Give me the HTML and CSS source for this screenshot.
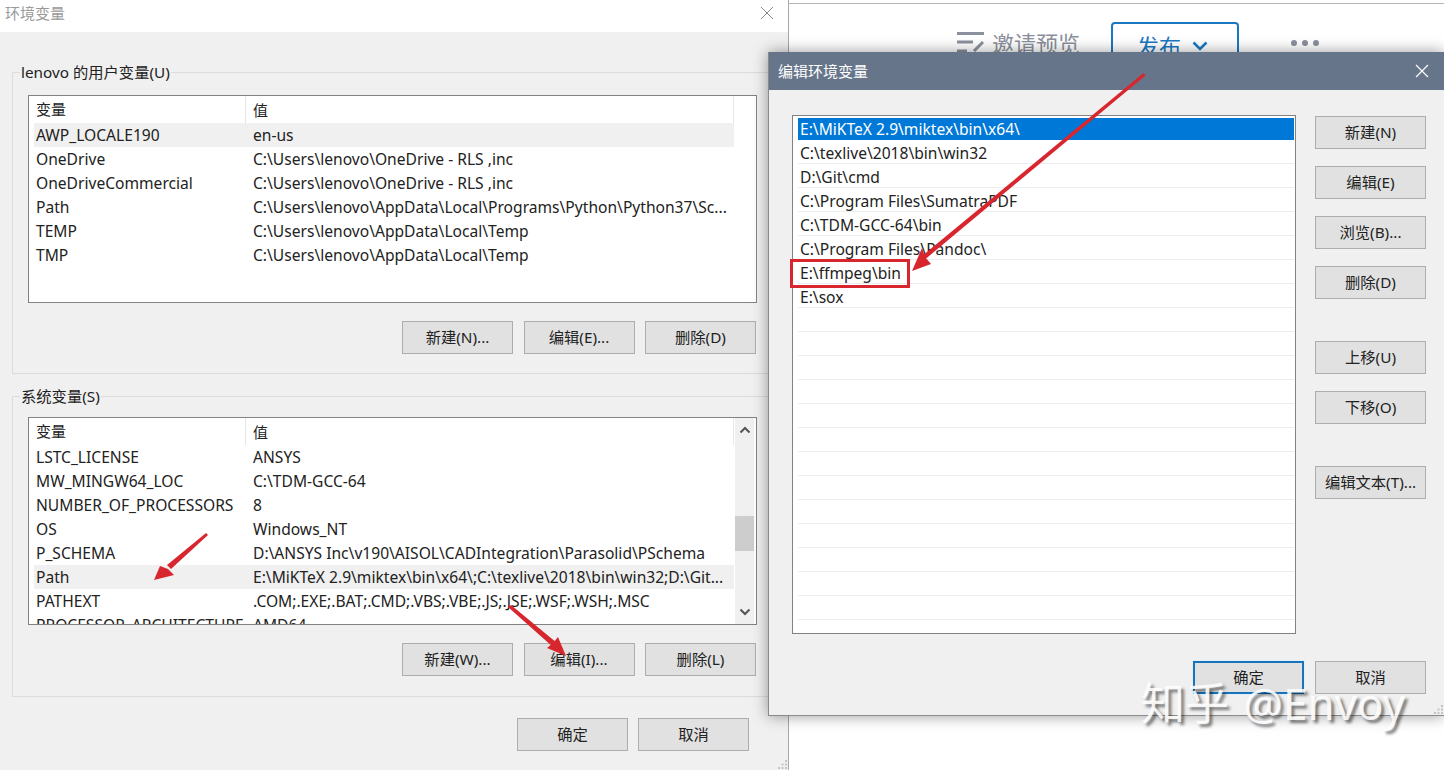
FILE: index.html
```html
<!DOCTYPE html>
<html lang="zh-CN">
<head>
<meta charset="utf-8">
<title>环境变量</title>
<link rel="stylesheet" href="styles.css">
</head>
<body>
<div class="desk">
  <section class="envwin">
    <header class="envtitle">
      <span>环境变量</span>
      <svg class="close" width="14" height="14" viewBox="0 0 14 14"><path d="M1 1L13 13M13 1L1 13" stroke="#8a8a8a" stroke-width="1" fill="none"/></svg>
    </header>
    <div class="envbody">
      <fieldset class="group group-user">
        <legend>lenovo 的用户变量(U)</legend>
        <div class="list">
          <div class="listmain">
            <div class="thead"><span class="c1">变量</span><span class="c2">值</span></div>
            <div class="row hl"><span class="c1">AWP_LOCALE190</span><span class="c2">en-us</span></div>
            <div class="row"><span class="c1">OneDrive</span><span class="c2">C:\Users\lenovo\OneDrive - RLS ,inc</span></div>
            <div class="row"><span class="c1">OneDriveCommercial</span><span class="c2">C:\Users\lenovo\OneDrive - RLS ,inc</span></div>
            <div class="row"><span class="c1">Path</span><span class="c2">C:\Users\lenovo\AppData\Local\Programs\Python\Python37\Sc...</span></div>
            <div class="row"><span class="c1">TEMP</span><span class="c2">C:\Users\lenovo\AppData\Local\Temp</span></div>
            <div class="row"><span class="c1">TMP</span><span class="c2">C:\Users\lenovo\AppData\Local\Temp</span></div>
          </div>
          <div class="sb-blank"></div>
        </div>
        <div class="btnrow">
          <button class="btn">新建(N)...</button>
          <button class="btn">编辑(E)...</button>
          <button class="btn">删除(D)</button>
        </div>
      </fieldset>
      <fieldset class="group group-sys">
        <legend>系统变量(S)</legend>
        <div class="list">
          <div class="listmain">
            <div class="thead"><span class="c1">变量</span><span class="c2">值</span></div>
            <div class="row"><span class="c1">LSTC_LICENSE</span><span class="c2">ANSYS</span></div>
            <div class="row"><span class="c1">MW_MINGW64_LOC</span><span class="c2">C:\TDM-GCC-64</span></div>
            <div class="row"><span class="c1">NUMBER_OF_PROCESSORS</span><span class="c2">8</span></div>
            <div class="row"><span class="c1">OS</span><span class="c2">Windows_NT</span></div>
            <div class="row"><span class="c1">P_SCHEMA</span><span class="c2">D:\ANSYS Inc\v190\AISOL\CADIntegration\Parasolid\PSchema</span></div>
            <div class="row hl"><span class="c1">Path</span><span class="c2">E:\MiKTeX 2.9\miktex\bin\x64\;C:\texlive\2018\bin\win32;D:\Git...</span></div>
            <div class="row"><span class="c1">PATHEXT</span><span class="c2">.COM;.EXE;.BAT;.CMD;.VBS;.VBE;.JS;.JSE;.WSF;.WSH;.MSC</span></div>
            <div class="row"><span class="c1">PROCESSOR_ARCHITECTURE</span><span class="c2">AMD64</span></div>
          </div>
          <div class="sb">
            <svg width="12" height="8" viewBox="0 0 12 8"><path d="M1.500 6.500L6 2L10.500 6.500" stroke="#555" stroke-width="2" fill="none"/></svg>
            <div class="sb-track"><div class="sb-thumb"></div></div>
            <svg width="12" height="8" viewBox="0 0 12 8"><path d="M1.500 1.500L6 6L10.500 1.500" stroke="#555" stroke-width="2" fill="none"/></svg>
          </div>
        </div>
        <div class="btnrow">
          <button class="btn">新建(W)...</button>
          <button class="btn">编辑(I)...</button>
          <button class="btn">删除(L)</button>
        </div>
      </fieldset>
      <footer class="envfoot">
        <button class="btn">确定</button>
        <button class="btn">取消</button>
      </footer>
    </div>
    <svg class="grip" width="11" height="11" viewBox="0 0 11 11"><path d="M8 1h2v2H8zM4.500 4.500h2v2h-2zM8 4.500h2v2H8zM1 8h2v2H1zM4.500 8h2v2h-2zM8 8h2v2H8z" fill="#c4c4c4"/></svg>
  </section>

  <main class="page">
    <div class="toolbar">
      <div class="invite">
        <svg class="invite-ico" width="28" height="22" viewBox="0 0 28 22"><path d="M0 1.500H27M0 10H16M0 19H10" stroke="#8a909c" stroke-width="3" fill="none"/><path d="M17 19L26 10" stroke="#8a909c" stroke-width="3" fill="none"/></svg>
        <span>邀请预览</span>
      </div>
      <div class="publish">
        <span>发布</span>
        <svg width="16" height="10" viewBox="0 0 16 10"><path d="M1.500 1.500L8 8L14.500 1.500" stroke="#1a78c2" stroke-width="2.500" fill="none"/></svg>
      </div>
      <div class="dots"><i></i><i></i><i></i></div>
    </div>
  </main>
</div>

<section class="editwin">
  <header class="edittitle">
    <span>编辑环境变量</span>
    <svg width="14" height="14" viewBox="0 0 14 14"><path d="M1 1L13 13M13 1L1 13" stroke="#fff" stroke-width="1.200" fill="none"/></svg>
  </header>
  <div class="editbody">
    <div class="editmain">
      <div class="pathlist">
        <div class="pathrow sel">E:\MiKTeX 2.9\miktex\bin\x64\</div>
        <div class="pathrow">C:\texlive\2018\bin\win32</div>
        <div class="pathrow">D:\Git\cmd</div>
        <div class="pathrow">C:\Program Files\SumatraPDF</div>
        <div class="pathrow">C:\TDM-GCC-64\bin</div>
        <div class="pathrow">C:\Program Files\Pandoc\</div>
        <div class="pathrow">E:\ffmpeg\bin</div>
        <div class="pathrow">E:\sox</div>
        <div class="pathrow"></div><div class="pathrow"></div><div class="pathrow"></div>
        <div class="pathrow"></div><div class="pathrow"></div><div class="pathrow"></div>
        <div class="pathrow"></div><div class="pathrow"></div><div class="pathrow"></div>
        <div class="pathrow"></div><div class="pathrow"></div><div class="pathrow"></div>
        <div class="pathrow"></div>
      </div>
      <div class="editside">
        <button class="btn">新建(N)</button>
        <button class="btn">编辑(E)</button>
        <button class="btn">浏览(B)...</button>
        <button class="btn">删除(D)</button>
        <button class="btn btn-sep">上移(U)</button>
        <button class="btn">下移(O)</button>
        <button class="btn btn-sep">编辑文本(T)...</button>
      </div>
    </div>
    <footer class="editfoot">
      <button class="btn btn-default">确定</button>
      <button class="btn">取消</button>
    </footer>
  </div>
  <svg class="grip" width="11" height="11" viewBox="0 0 11 11"><path d="M8 1h2v2H8zM4.500 4.500h2v2h-2zM8 4.500h2v2H8zM1 8h2v2H1zM4.500 8h2v2h-2zM8 8h2v2H8z" fill="#c4c4c4"/></svg>
</section>

<div class="redbox"></div>
<svg class="arrows" width="1444" height="770" viewBox="0 0 1444 770">
  <polygon points="1143.500,73 1145.500,75.500 925.500,259 922,256" fill="#d8262f"/>
  <polygon points="912,271 922,248 925,257 931,264" fill="#d8262f"/>
  <polygon points="206,533 208,535 171,569 167,565" fill="#d8262f"/>
  <polygon points="154,580 160,566 168,569 174,575" fill="#d8262f"/>
  <polygon points="508,607 511,605 557,643 553,647" fill="#d8262f"/>
  <polygon points="566,656 547,648 553,643 558,637" fill="#d8262f"/>
</svg>
<div class="watermark">知乎 @Envoy</div>
</body>
</html>
```

FILE: styles.css
```css
* { box-sizing: border-box; }
html, body { margin: 0; padding: 0; }
body {
  width: 1444px;
  height: 770px;
  overflow: hidden;
  position: relative;
  background: #fff;
  color: #222;
  font: 15px/20px "Noto Sans", "Noto Sans CJK SC", sans-serif;
}
.desk { display: flex; height: 770px; }

.envwin {
  position: relative;
  width: 789px;
  flex: none;
  height: 770px;
  background: #f0f0f0;
  border-right: 1px solid #a8a8a8;
}
.envtitle {
  height: 32px;
  background: #fff;
  color: #9a9a9a;
  display: flex;
  align-items: center;
  justify-content: space-between;
  padding: 0 14px 6px 5px;
}
.envbody { padding: 30px 0 0 12px; }

.group {
  width: 764px;
  margin: 0;
  padding: 13px 19px 0 15px;
  border: 1px solid #dcdcdc;
  min-width: 0;
}
.group legend { margin-left: -8px; padding: 0 1px; line-height: 20px; height: 20px; font-size: 15.3px; }
.group-user { height: 312px; }
.group-sys { height: 311px; margin-top: 12px; padding-top: 11px; }

.list {
  display: flex;
  height: 208px;
  width: 729px;
  background: #fff;
  border: 1px solid #828282;
  overflow: hidden;
}
.listmain { width: 705px; flex: none; padding-left: 5px; overflow: hidden; }
.sb-blank { flex: 1; }
.thead { display: flex; height: 27px; align-items: center; border-right: 1px solid #e8e8e8; }
.thead .c1 { border-right: 1px solid #e5e5e5; height: 27px; line-height: 27px; }
.row { display: flex; height: 24px; align-items: center; white-space: nowrap; font-size: 15.6px; }
.row.hl { background: #f0f0f0; }
.c1 { width: 212px; flex: none; padding-left: 2px; }
.c2 { padding-left: 7px; }

.sb {
  width: 19px;
  margin: 0 2px 0 1px;
  background: #f0f0f0;
  display: flex;
  flex-direction: column;
  align-items: center;
  padding-top: 8px;
  padding-bottom: 8px;
}
.sb-track { flex: 1; width: 100%; padding-top: 82px; }
.sb-thumb { height: 35px; background: #cdcdcd; }

.btnrow {
  display: flex;
  justify-content: flex-end;
  gap: 10.5px;
  margin-top: 18px;
}
.btn {
  width: 111px;
  height: 33px;
  padding: 0 0 2px;
  background: #e1e1e1;
  border: 1px solid #adadad;
  color: #222;
  font: inherit;
  font-size: 15.3px;
  text-align: center;
}
.btn-default {
  border: 2px solid #1a72b8;
  box-shadow: 0 0 0 1px #e0f0fa;
}
.envfoot {
  display: flex;
  justify-content: flex-end;
  gap: 10px;
  width: 737px;
  margin-top: 21px;
}
.grip { position: absolute; right: 0; bottom: 0; }

.page { flex: 1; min-width: 0; }
.toolbar {
  margin-top: 3px;
  height: 100px;
  border-top: 1px solid #b5b5b5;
  display: flex;
  align-items: flex-start;
  padding: 18px 0 0 168px;
}
.invite {
  display: flex;
  align-items: flex-start;
  gap: 7px;
  margin-top: 7px;
  color: #8a909c;
  font-size: 22px;
  line-height: 28px;
}
.invite-ico { margin-top: 3px; }
.publish {
  margin-left: 31px;
  width: 128px;
  height: 60px;
  border: 2px solid #1a78c2;
  border-radius: 4px;
  color: #1a78c2;
  font-size: 22px;
  line-height: 28px;
  padding: 8px 0 0 24px;
  display: flex;
  gap: 11px;
}
.publish svg { margin-top: 9px; }
.dots { display: flex; gap: 5px; margin: 18px 0 0 52px; }
.dots i { width: 6px; height: 6px; border-radius: 50%; background: #8a909c; display: block; }

.editwin {
  position: absolute;
  left: 768px;
  top: 52px;
  width: 676px;
  height: 664px;
  background: #f0f0f0;
  border-left: 1px solid #8a8a8a;
  border-bottom: 1px solid #8a8a8a;
  box-shadow: 0 0 14px rgba(0, 0, 0, .4);
}
.edittitle {
  height: 38px;
  background: #66758a;
  color: #fff;
  display: flex;
  justify-content: space-between;
  align-items: center;
  padding: 0 15px 0 9px;
}
.editbody { padding: 25px 18px 0 23px; }
.editmain { display: flex; gap: 19px; align-items: flex-start; }
.pathlist {
  width: 504px;
  height: 519px;
  flex: none;
  background: #fff;
  border: 1px solid #828282;
  padding: 2px 1px 0 5px;
  overflow: hidden;
  font-size: 15.6px;
}
.pathrow {
  height: 24px;
  padding-left: 2px;
  line-height: 26px;
  border-bottom: 1px solid #ededed;
  white-space: nowrap;
}
.pathrow.sel { height: 22px; line-height: 22px; background: #0078d7; color: #fff; border-bottom: 0; }
.editside { display: flex; flex-direction: column; gap: 17px; margin-top: 1px; }
.btn-sep { margin-top: 25px; }
.editfoot {
  display: flex;
  justify-content: flex-end;
  gap: 11px;
  margin-top: 27px;
}

.redbox {
  position: absolute;
  left: 790px;
  top: 259px;
  width: 120px;
  height: 29px;
  border: 3px solid #d8262f;
}
.arrows { position: absolute; left: 0; top: 0; pointer-events: none; }
.watermark {
  position: absolute;
  left: 1141px;
  top: 673px;
  font-size: 44px;
  line-height: 60px;
  word-spacing: 3px;
  white-space: nowrap;
  color: rgba(255, 255, 255, .88);
  text-shadow: 3px 3px 3px rgba(0, 0, 0, .5);
}
```
